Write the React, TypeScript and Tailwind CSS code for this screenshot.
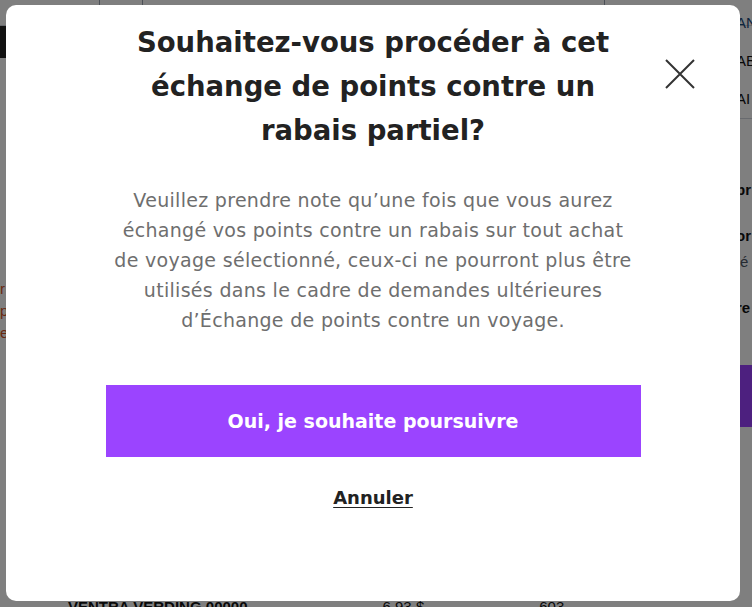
import React from 'react';

const FONT = { fontFamily: '"DejaVu Sans", "Open Sans", sans-serif' };

const BgPage: React.FC = () => (
  <div className="h-[607px] bg-white flex flex-col overflow-hidden" style={{ fontFamily: '"Liberation Sans", Arial, sans-serif' }}>
    {/* top strip with column lines */}
    <div className="h-[26px] shrink-0 flex border-b border-gray-300">
      <div className="w-[100px] border-r border-gray-400" />
      <div className="w-[43px] border-r border-gray-400" />
      <div className="flex-1 border-r border-gray-400" />
      <div className="w-[147px]" />
    </div>
    <div className="flex flex-1">
      {/* left column */}
      <div className="w-[120px] flex flex-col">
        <div className="h-[32px] bg-[#222]" />
        <div className="mt-[220px] text-[#d2521f] text-[15px] leading-[22px]">
          <p>r</p>
          <p>p</p>
          <p>e</p>
        </div>
      </div>
      <div className="flex-1" />
      {/* right column, mostly hidden by the dialog */}
      <div className="w-[16px] flex flex-col text-[15px] text-[#111] -mt-[22px] whitespace-nowrap">
        <p className="leading-[38px] text-[#1b4a7a]">AN</p>
        <p className="leading-[38px]">AB</p>
        <p className="leading-[38px] border-b border-gray-300 -mr-[20px]">AI</p>
        <p className="mt-[62px] leading-[17px] font-bold">br</p>
        <p className="mt-[29px] leading-[17px] font-bold">or</p>
        <p className="mt-[9px] leading-[17px] text-gray-600 pl-[4px]">é</p>
        <p className="mt-[29px] leading-[17px] font-bold">re</p>
        <div className="mt-[49px] h-[62px] bg-[#9a40ff] -mr-[20px]" />
      </div>
    </div>
    <div className="h-[20px] shrink-0 flex items-start pt-[12px] text-[15px] leading-[15px] text-[#111] font-bold">
      <span className="ml-[68px]">VENTRA VERDING 00000</span>
      <span className="ml-[135px] font-normal">6,93 $</span>
      <span className="ml-[115px] font-normal">603</span>
    </div>
  </div>
);

const App: React.FC = () => {
  return (
    <div className="relative w-[752px] h-[607px] overflow-hidden">
      <BgPage />

      {/* overlay */}
      <div className="fixed inset-0 bg-black/50 flex items-start justify-start">
        <div
          className="relative mt-[5px] ml-[6px] w-[734px] h-[596px] bg-white rounded-[10px] px-[100px] pt-[15px] flex flex-col items-center"
          style={FONT}
        >
          <button className="absolute left-[653px] top-[49px] w-[42px] h-[40px] flex items-center justify-center" aria-label="Fermer">
            <svg width="32" height="32" viewBox="0 0 32 32" fill="none" stroke="#333" strokeWidth="2">
              <path d="M2 2 L30 30 M30 2 L2 30" />
            </svg>
          </button>

          <h2 className="text-[27.5px] leading-[44px] font-bold text-[#222] text-center whitespace-nowrap">
            Souhaitez-vous procéder à cet
            <br />
            échange de points contre un
            <br />
            rabais partiel?
          </h2>

          <p className="mt-[33px] text-[19px] leading-[30px] tracking-[0.3px] text-[#6e6e6e] text-center whitespace-nowrap">
            Veuillez prendre note qu’une fois que vous aurez
            <br />
            échangé vos points contre un rabais sur tout achat
            <br />
            de voyage sélectionné, ceux-ci ne pourront plus être
            <br />
            utilisés dans le cadre de demandes ultérieures
            <br />
            d’Échange de points contre un voyage.
          </p>

          <button className="mt-[50px] w-[535px] h-[72px] shrink-0 bg-[#9b44ff] text-white text-[19px] font-bold">
            Oui, je souhaite poursuivre
          </button>

          <button className="mt-[27px] text-[18px] leading-[28px] font-bold text-[#222] underline underline-offset-[3px]">
            Annuler
          </button>
        </div>
      </div>
    </div>
  );
};

export default App;
